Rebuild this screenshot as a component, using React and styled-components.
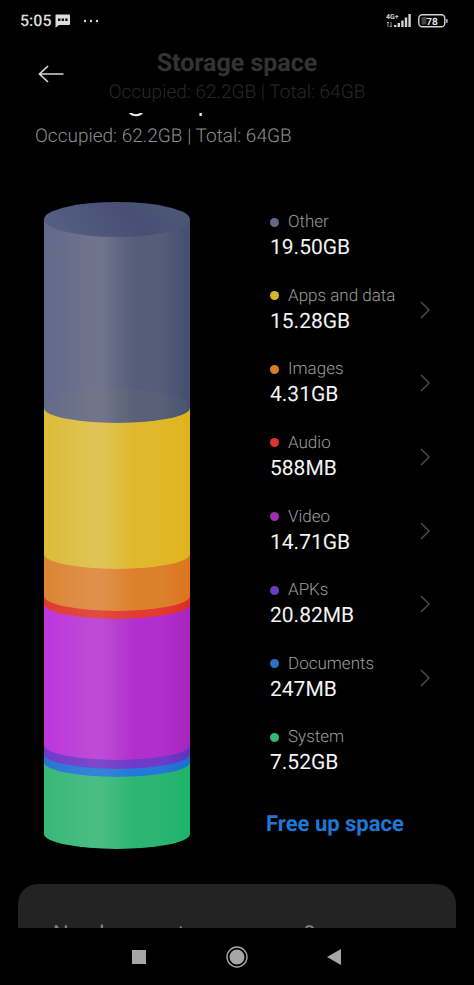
import React from "react";
import styled, { createGlobalStyle } from "styled-components";

const GlobalStyle = createGlobalStyle`
  *, *::before, *::after { box-sizing: border-box; }
  body {
    margin: 0;
    background: #000;
    color: #f2f2f2;
    font-family: Roboto, "Liberation Sans", sans-serif;
    text-rendering: geometricPrecision;
  }
  button { font: inherit; color: inherit; background: none; border: 0; padding: 0; cursor: pointer; text-rendering: inherit; }
  svg { display: block; flex: none; }
`;

const Screen = styled.div`
  height: 100vh;
  display: flex;
  flex-direction: column;
  overflow: hidden;
  background: #000;
`;

const StatusBar = styled.div`
  flex: none;
  height: 42px;
  padding: 0 26px 0 20px;
  display: flex;
  align-items: center;
  justify-content: space-between;
  color: #dcdcdc;
`;

const StatusGroup = styled.div`
  display: flex;
  align-items: center;
  gap: ${(p) => p.$gap}px;
`;

const Clock = styled.time`
  font-size: 16px;
  line-height: 20px;
  font-weight: 500;
`;

const AppBar = styled.header`
  flex: none;
  height: 71px;
  padding: 0 36px;
  display: grid;
  grid-template-columns: 30px 1fr 30px;
  align-items: start;
`;

const BackButton = styled.button`
  height: 64px;
  display: flex;
  align-items: center;
`;

const BarTitles = styled.div`
  padding-top: 7px;
  text-align: center;
  white-space: nowrap;
`;

const BarTitle = styled.h1`
  margin: 0;
  font-size: 25px;
  line-height: 30px;
  font-weight: 700;
  color: #333;
`;

const Summary = styled.p`
  margin: 0;
  font-size: 19px;
  line-height: 26px;
  font-weight: 300;
  color: ${(p) => (p.$faded ? "#282828" : "#8e8e8e")};
`;

const Content = styled.main`
  flex: 1;
  min-height: 0;
  overflow: hidden;
  display: flex;
  flex-direction: column;
`;

const PageHeading = styled.section`
  flex: none;
  padding: 0 35px;
`;

const LargeTitleClip = styled.div`
  height: 10px;
  display: flex;
  align-items: flex-end;
  overflow: hidden;
`;

const LargeTitle = styled.h2`
  margin: 0;
  font-size: 39px;
  line-height: 56px;
  font-weight: 300;
  color: #e6e6e6;
`;

const Overview = styled.section`
  flex: none;
  padding: 53px 44px 0 44px;
  display: grid;
  grid-template-columns: 146px 1fr;
  column-gap: 76px;
`;

const Details = styled.div`
  padding-top: 8px;
  display: flex;
  flex-direction: column;
  align-items: flex-start;
`;

const Categories = styled.ul`
  width: 100%;
  height: 589px;
  margin: 0;
  padding: 0 0 0 4px;
  list-style: none;
  display: grid;
  grid-template-rows: repeat(8, 1fr);
`;

const CategoryRow = styled.div`
  width: 100%;
  display: flex;
  align-items: center;
  justify-content: space-between;
  text-align: left;
`;

const CategoryLabel = styled.span`
  display: flex;
  align-items: center;
  gap: 9px;
  font-size: 17px;
  line-height: 24px;
  font-weight: 300;
  color: #9c9c9c;
`;

const Dot = styled.i`
  width: 9px;
  height: 9px;
  border-radius: 50%;
  background: ${(p) => p.$color};
`;

const CategorySize = styled.span`
  display: block;
  font-size: 21px;
  line-height: 28px;
  color: #f4f4f4;
`;

const FreeUpButton = styled.button`
  margin-top: 12px;
  && {
    font-size: 22px;
    line-height: 28px;
    font-weight: 700;
    color: #1f78d6;
  }
`;

const HintCard = styled.section`
  flex: none;
  margin: 35px 18px 0;
  padding: 35px 35px;
  border-radius: 20px;
  background: #232323;
`;

const HintText = styled.p`
  margin: 0;
  font-size: 22px;
  line-height: 32px;
  color: #858585;
`;

const NavBar = styled.nav`
  flex: none;
  height: 57px;
  display: flex;
  align-items: center;
  justify-content: center;
  gap: 74px;
  background: #000;
`;

const NavButton = styled.button`
  width: 24px;
  height: 24px;
`;

const categories = [
  { name: "Other", size: "19.50GB", dot: "#616984", end: 221, shades: ["#62698b", "#70738c", "#555d78", "#434e70"] },
  { name: "Apps and data", size: "15.28GB", dot: "#d9b427", end: 367, shades: ["#dcbb37", "#dfc455", "#dfb92b", "#e0b31b"], link: true },
  { name: "Images", size: "4.31GB", dot: "#db7c28", end: 409, shades: ["#da8534", "#df914b", "#dc812b", "#dc741d"], link: true },
  { name: "Audio", size: "588MB", dot: "#d93832", end: 417, shades: ["#df3932", "#e04b3e", "#e23a30", "#dd2b26"], link: true },
  { name: "Video", size: "14.71GB", dot: "#9d2eb3", end: 558, shades: ["#bd36dc", "#bd4bd6", "#b12fcd", "#a526bd"], link: true },
  { name: "APKs", size: "20.82MB", dot: "#6d3bbb", end: 567, shades: ["#703bc8", "#7948cb", "#6c3bcb", "#6233bd"], link: true },
  { name: "Documents", size: "247MB", dot: "#2972cb", end: 575, shades: ["#2775d3", "#3583d8", "#2379d8", "#1b6dcd"], link: true },
  { name: "System", size: "7.52GB", dot: "#37b576", end: 647, shades: ["#38b878", "#49bd84", "#2bb573", "#1bb368"] },
];

function StorageCylinder() {
  return (
    <svg width="146" height="647" viewBox="0 0 146 647" role="img" aria-label="Storage use by category">
      <defs>
        {categories.map(({ name, shades }, i) => (
          <linearGradient key={name} id={`band-${i}`}>
            <stop offset="0" stopColor={shades[0]} />
            <stop offset="0.33" stopColor={shades[1]} />
            <stop offset="0.4" stopColor={shades[1]} />
            <stop offset="0.62" stopColor={shades[2]} />
            <stop offset="0.8" stopColor={shades[2]} />
            <stop offset="1" stopColor={shades[3]} />
          </linearGradient>
        ))}
        <linearGradient id="lid" x1="0" y1="0.6" x2="1" y2="0.4">
          <stop offset="0" stopColor="#566083" />
          <stop offset="0.6" stopColor="#475074" />
          <stop offset="1" stopColor="#4d5775" />
        </linearGradient>
      </defs>
      {categories
        .map(({ name, end }, i) => (
          <path key={name} d={`M0 18 V${end - 15} A73 15 0 0 0 146 ${end - 15} V18 Z`} fill={`url(#band-${i})`} />
        ))
        .reverse()}
      <ellipse cx="73" cy="204" rx="73" ry="17" fill="#8c8c78" fillOpacity="0.07" />
      <ellipse cx="73" cy="17.5" rx="73" ry="17.5" fill="url(#lid)" />
    </svg>
  );
}

function Chevron() {
  return (
    <svg width="10" height="18" viewBox="0 0 10 18" fill="none" stroke="#4d4d4d" strokeWidth="1.4" aria-hidden="true">
      <path d="M1 1 L9 9 L1 17" />
    </svg>
  );
}

function Category({ name, size, dot, link }) {
  return (
    <li>
      <CategoryRow as={link ? "button" : "div"}>
        <span>
          <CategoryLabel><Dot $color={dot} />{name}</CategoryLabel>
          <CategorySize>{size}</CategorySize>
        </span>
        {link && <Chevron />}
      </CategoryRow>
    </li>
  );
}

function MessageIcon() {
  return (
    <svg width="16" height="14" viewBox="0 0 16 14" aria-hidden="true">
      <path d="M1 0.5 H14 Q15 0.5 15 1.5 V10 Q15 11 14 11 H4 L0.5 13.8 V1.5 Q0.5 0.5 1 0.5 Z" fill="#dcdcdc" />
      <path d="M3 4.5h2.4v2.4H3z M6.6 4.5H9v2.4H6.6z M10.2 4.5h2.4v2.4h-2.4z" fill="#111" />
    </svg>
  );
}

function MoreIcon() {
  return (
    <svg width="16" height="4" viewBox="0 0 16 4" fill="#dcdcdc" aria-hidden="true">
      <circle cx="2" cy="2" r="1.2" /><circle cx="8" cy="2" r="1.2" /><circle cx="14" cy="2" r="1.2" />
    </svg>
  );
}

function SignalIcon() {
  return (
    <svg width="26" height="16" viewBox="0 0 26 16" fill="#d2d2d2" role="img" aria-label="4G+ signal">
      <text x="0" y="6" fontSize="7" fontWeight="700">4G+</text>
      <path d="M2 9 V14 M1 10.2 L2 9 L3 10.2 M5 9 V14 M4 12.8 L5 14 L6 12.8" stroke="#bcbcbc" strokeWidth="0.8" fill="none" />
      <path d="M8 12h2.4v2H8z M11.6 10H14v4h-2.4z M15.2 7.5h2.4V14h-2.4z M18.8 4.5h2.4V14h-2.4z M22.4 1h2.4v13h-2.4z" />
    </svg>
  );
}

function BatteryIcon() {
  return (
    <svg width="30" height="14" viewBox="0 0 30 14" role="img" aria-label="Battery 78%">
      <rect x="0.8" y="0.8" width="26" height="12" rx="3.5" fill="none" stroke="#d2d2d2" strokeWidth="1.4" />
      <rect x="3.5" y="3" width="5" height="7.6" rx="1" fill="#444" />
      <rect x="28.2" y="5" width="1.4" height="4" rx="0.7" fill="#d2d2d2" />
      <text x="14" y="10.6" textAnchor="middle" fontSize="10" fontWeight="700" fill="#e4e4e4">78</text>
    </svg>
  );
}

export default function App() {
  return (
    <>
      <GlobalStyle />
      <Screen>
        <StatusBar>
          <StatusGroup $gap={12}>
            <StatusGroup $gap={3}><Clock>5:05</Clock><MessageIcon /></StatusGroup>
            <MoreIcon />
          </StatusGroup>
          <StatusGroup $gap={6}><SignalIcon /><BatteryIcon /></StatusGroup>
        </StatusBar>
        <AppBar>
          <BackButton aria-label="Back">
            <svg width="28" height="18" viewBox="0 0 28 18" fill="none" stroke="#d8d8d8" strokeWidth="1.7" aria-hidden="true">
              <path d="M27.5 9 H3.5 M12 1 L3.5 9 L12 17" />
            </svg>
          </BackButton>
          <BarTitles>
            <BarTitle>Storage space</BarTitle>
            <Summary $faded>Occupied: 62.2GB | Total: 64GB</Summary>
          </BarTitles>
        </AppBar>
        <Content>
          <PageHeading>
            <LargeTitleClip><LargeTitle>Storage space</LargeTitle></LargeTitleClip>
            <Summary>Occupied: 62.2GB | Total: 64GB</Summary>
          </PageHeading>
          <Overview>
            <StorageCylinder />
            <Details>
              <Categories>
                {categories.map((c) => <Category key={c.name} {...c} />)}
              </Categories>
              <FreeUpButton>Free up space</FreeUpButton>
            </Details>
          </Overview>
          <HintCard>
            <HintText>Need more storage space?</HintText>
          </HintCard>
        </Content>
        <NavBar aria-label="System navigation">
          <NavButton aria-label="Recent apps">
            <svg width="24" height="24" viewBox="0 0 24 24" fill="#a6a6a6"><path d="M5 5h14v14H5z" /></svg>
          </NavButton>
          <NavButton aria-label="Home">
            <svg width="24" height="24" viewBox="0 0 24 24" fill="#a6a6a6">
              <circle cx="12" cy="12" r="7.5" />
              <circle cx="12" cy="12" r="10" fill="none" stroke="#a6a6a6" strokeWidth="1.4" />
            </svg>
          </NavButton>
          <NavButton aria-label="Back to previous screen">
            <svg width="24" height="24" viewBox="0 0 24 24" fill="#a6a6a6"><path d="M4 12 L18 4 V20 Z" /></svg>
          </NavButton>
        </NavBar>
      </Screen>
    </>
  );
}
